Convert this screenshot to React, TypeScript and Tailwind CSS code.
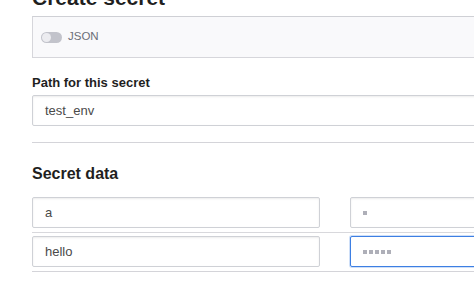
// Create secret form (partial view)

const inputBase =
  'h-[31px] border rounded-[2px] bg-white flex items-center pl-3 text-[13px] text-[#4a4a4a]';
const idle = 'border-[#cfd1d6] shadow-[inset_0_1px_2px_rgba(0,0,0,0.08)]';
const focused = 'border-[#3d7fe3] shadow-[0_0_0_1px_rgba(61,127,227,0.25)]';

function MaskDots({ count }: { count: number }) {
  return (
    <div className="flex items-center gap-[2px]">
      {Array.from({ length: count }).map((_, i) => (
        <span key={i} className="block w-[4px] h-[4px] bg-[#aeafb8]" />
      ))}
    </div>
  );
}

export default function App() {
  return (
    <div
      className="w-[474px] h-[304px] overflow-hidden bg-white"
      style={{ fontFamily: '"Liberation Sans", Arial, sans-serif' }}
    >
      <div className="pl-8 w-[760px]">
        <h1 className="mt-[-14px] text-[21px] leading-[24px] font-bold text-[#1f1f1f]">
          Create secret
        </h1>

        <div className="mt-[6px] h-[42px] border border-[#d6d6db] border-t-[#cfd0d5] bg-[#f9f9fb] flex items-center pl-2 gap-[6px]">
          <div className="w-[21px] h-[11px] rounded-full bg-[#c2c3cb] relative">
            <span className="absolute left-[1px] top-[1px] w-[9px] h-[9px] rounded-full bg-[#ececf0]" />
          </div>
          <span className="text-[11.5px] text-[#6b6e78]">JSON</span>
        </div>

        <label className="block mt-[17px] text-[13px] leading-4 font-bold text-[#1f1f1f]">
          Path for this secret
        </label>
        <div className={`mt-[4px] ${inputBase} ${idle}`}>test_env</div>
        <div className="mt-4 border-b border-[#d4d4d9]" />

        <h2 className="mt-[21px] text-[16px] leading-5 font-bold text-[#1f1f1f]">
          Secret data
        </h2>

        <div className="mt-[13px]">
          <div className="flex gap-[30px] pb-1 border-b border-[#d8d8dc]">
            <div className={`w-[288px] ${inputBase} ${idle}`}>a</div>
            <div className={`w-[300px] ${inputBase} ${idle}`}>
              <MaskDots count={1} />
            </div>
          </div>
          <div className="flex gap-[30px] pt-[3px] pb-1 border-b border-[#d4d4d9]">
            <div className={`w-[288px] ${inputBase} ${idle}`}>hello</div>
            <div className={`w-[300px] ${inputBase} ${focused}`}>
              <MaskDots count={5} />
            </div>
          </div>
        </div>
      </div>
    </div>
  );
}
